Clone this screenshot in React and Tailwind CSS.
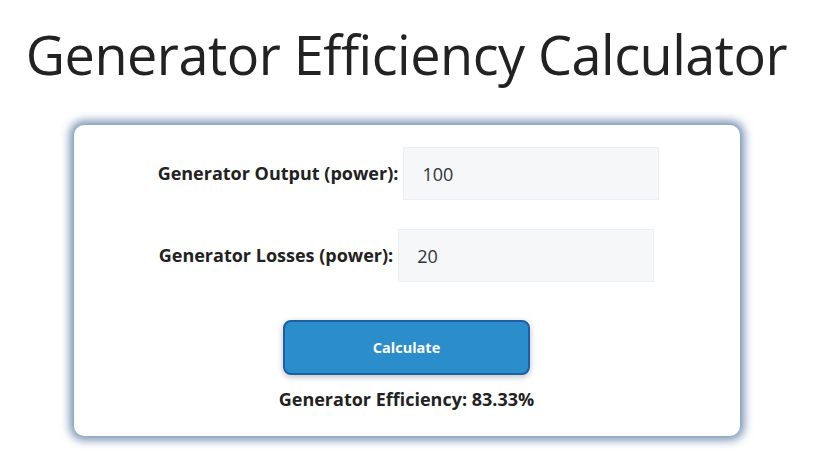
import React, { useState } from "react";

const Field = ({ label, value, onChange }) => (
  <div className="flex items-center justify-center gap-[5px]">
    <label className="text-[18px] font-bold text-[#222]">{label}</label>
    <input
      type="text"
      value={value}
      onChange={(e) => onChange(e.target.value)}
      className="w-[256px] h-[53px] px-[18px] bg-[#f6f7f9] border border-[#eceef1] text-[18px] text-[#333] outline-none"
    />
  </div>
);

const App = () => {
  const [output, setOutput] = useState("100");
  const [losses, setLosses] = useState("20");
  const [result, setResult] = useState("83.33");

  const calculate = () => {
    const o = parseFloat(output);
    const l = parseFloat(losses);
    if (!isNaN(o) && !isNaN(l) && o + l !== 0) {
      setResult(((o / (o + l)) * 100).toFixed(2));
    }
  };

  return (
    <div className="min-h-[468px] bg-white pr-[15px] font-['Open_Sans',sans-serif] text-[#222]">
      <h1 className="pt-[16px] text-center text-[54px] leading-[76px] font-normal text-[#222] tracking-[-0.5px]">
        Generator Efficiency Calculator
      </h1>
      <div className="mx-auto mt-[33px] w-[666px] h-[311px] rounded-[10px] bg-white shadow-[0_0_10px_4px_rgba(70,105,150,0.75)] pt-[22px]">
        <div className="flex flex-col gap-[29px]">
          <div className="pl-[4px]">
            <Field label="Generator Output (power):" value={output} onChange={setOutput} />
          </div>
          <Field label="Generator Losses (power):" value={losses} onChange={setLosses} />
        </div>
        <div className="flex flex-col items-center mt-[38px]">
          <button
            onClick={calculate}
            className="w-[247px] h-[55px] rounded-[8px] bg-[#2b8dc9] border-2 border-[#1b5fa6] text-white text-[14.5px] font-bold shadow-[0_2px_6px_rgba(0,0,0,0.25)]"
          >
            Calculate
          </button>
          <p className="mt-[11px] text-[18px] font-bold text-[#222]">
            Generator Efficiency: {result}%
          </p>
        </div>
      </div>
    </div>
  );
};

export default App;
